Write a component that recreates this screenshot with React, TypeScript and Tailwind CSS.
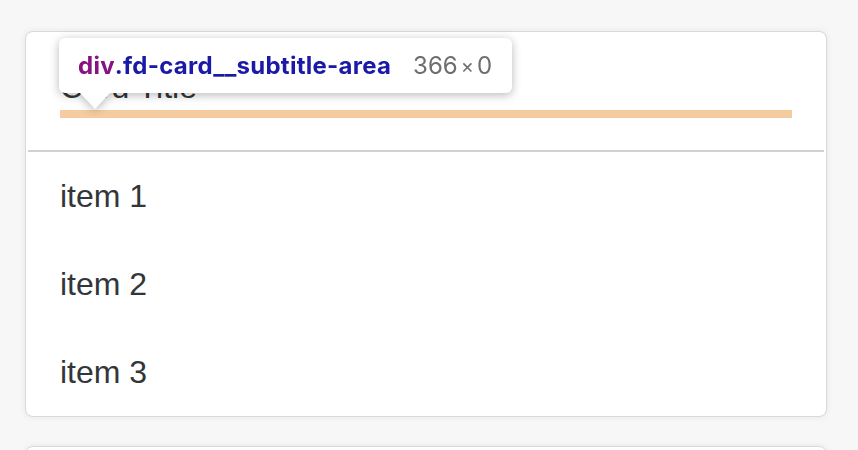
const items = ["item 1", "item 2", "item 3"];

export default function App() {
  return (
    <div className="relative h-[450px] overflow-hidden bg-[#f7f7f7] pt-[31px] pl-[25px] font-['Liberation_Sans',Arial,sans-serif]">
      {/* Card */}
      <div className="w-[802px] rounded-[8px] border border-[#d9d9d9] bg-white shadow-[0_0_6px_rgba(0,0,0,0.08)]">
        <div className="px-[34px] pt-[37px] pb-[32px]">
          <div className="h-[36px] text-[32px] leading-[36px] text-[#32363a]">Card Title</div>
          <div className="mt-[5px] h-[8px] bg-[#f6cb9f]" />
        </div>
        <div className="mx-[2px] h-[2px] bg-[#d0d0d0]" />
        <ul>
          {items.map((item) => (
            <li key={item} className="flex h-[88px] items-center pl-[34px] text-[32px] text-[#32363a]">
              {item}
            </li>
          ))}
        </ul>
      </div>

      {/* Next card peeking in */}
      <div className="mt-[29px] h-[100px] w-[802px] rounded-[8px] border border-[#d9d9d9] bg-white shadow-[0_0_6px_rgba(0,0,0,0.08)]" />

      {/* Inspector tooltip */}
      <div className="absolute left-[59px] top-[38px] drop-shadow-[0_2px_5px_rgba(0,0,0,0.28)]">
        <div className="flex h-[55px] w-[453px] items-center rounded-[6px] bg-white pl-[19px] font-['Inter',sans-serif] text-[24px]">
          <span className="font-bold tracking-[0.25px] text-[#881280]">div</span>
          <span className="font-bold tracking-[0.25px] text-[#1a1aa6]">.fd-card__subtitle-area</span>
          <span className="ml-[22px] flex items-center text-[#6e6e6e]">
            366<span className="mx-[3px] text-[20px]">×</span>0
          </span>
        </div>
        <div className="ml-[21px] h-0 w-0 border-x-[15px] border-t-[16px] border-x-transparent border-t-white" />
      </div>
    </div>
  );
}
